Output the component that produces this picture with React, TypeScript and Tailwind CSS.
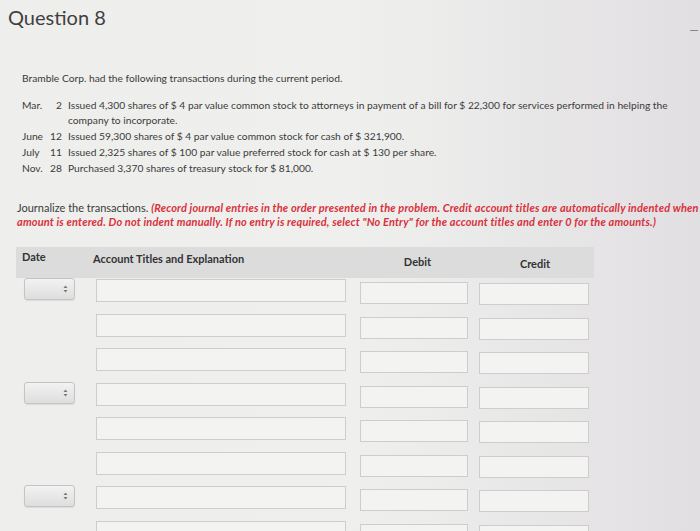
const rows = [true, false, false, true, false, false, true, false]

const txns = [
  { m: 'Mar.', d: '2', text: 'Issued 4,300 shares of $ 4 par value common stock to attorneys in payment of a bill for $ 22,300 for services performed in helping the company to incorporate.' },
  { m: 'June', d: '12', text: 'Issued 59,300 shares of $ 4 par value common stock for cash of $ 321,900.' },
  { m: 'July', d: '11', text: 'Issued 2,325 shares of $ 100 par value preferred stock for cash at $ 130 per share.' },
  { m: 'Nov.', d: '28', text: 'Purchased 3,370 shares of treasury stock for $ 81,000.' },
]

function DateSelect() {
  return (
    <div className="w-[51px] h-[22px] rounded-[3px] border border-[#c4c4c4] bg-gradient-to-b from-[#f2f2f2] to-[#dedede] flex items-center justify-end pr-[6px] shadow-[0_1px_1px_rgba(0,0,0,0.08)]">
      <svg width="5" height="8" viewBox="0 0 5 8">
        <path d="M2.5 0.5 L4.5 3 H0.5 Z" fill="#777" />
        <path d="M2.5 7.5 L4.5 5 H0.5 Z" fill="#777" />
      </svg>
    </div>
  )
}

export default function App() {
  return (
    <div className="w-[700px] h-[531px] overflow-hidden bg-gradient-to-r from-[#eeeeec] via-[#eff0ee] to-[#e2dfe2] text-[#3b3b3b] font-['Lato','Open_Sans',sans-serif] relative">
      <div className="pl-[8px] pt-[4px] text-[20px] leading-[26px] text-[#3f3f3f]">Question 8</div>
      <div className="absolute right-[2px] top-[30px] w-[8px] h-px bg-[#888]" />

      <div className="pl-[22px] pr-[20px] pt-[40px] text-[10.25px] leading-[16px]">
        <div>Bramble Corp. had the following transactions during the current period.</div>
        <div className="mt-[11px] flex flex-col">
          {txns.map(t => (
            <div key={t.m} className="flex">
              <div className="w-[46px] shrink-0 flex justify-between pr-[6px]">
                <span>{t.m}</span>
                <span>{t.d}</span>
              </div>
              <div className="flex-1 leading-[15px] pt-[1px]">{t.text}</div>
            </div>
          ))}
        </div>
      </div>

      <div className="pl-[17px] pt-[25px] text-[11px] leading-[14px] whitespace-nowrap">
        <div>
          Journalize the transactions.{' '}
          <span className="text-[#d8323c] italic font-bold tracking-[0.15px]">
            (Record journal entries in the order presented in the problem. Credit account titles are automatically indented when
          </span>
        </div>
        <div className="text-[#d8323c] italic font-bold tracking-[0.15px]">
          amount is entered. Do not indent manually. If no entry is required, select "No Entry" for the account titles and enter 0 for the amounts.)
        </div>
      </div>

      <div className="ml-[16px] w-[578px] mt-[18px]">
        <div className="h-[31px] bg-[#dcdcdc] flex items-start text-[11px] leading-[14px] font-bold text-[#333]">
          <div className="w-[77px] pl-[6px] pt-[3px]">Date</div>
          <div className="w-[266px] pt-[5px]">Account Titles and Explanation</div>
          <div className="w-[117px] text-center pt-[8px]">Debit</div>
          <div className="w-[118px] text-center pt-[10px]">Credit</div>
        </div>
        <div className="flex flex-col gap-[11.5px] pt-[1px]">
          {rows.map((sel, i) => (
            <div key={i} className="flex items-start h-[23px]">
              <div className="w-[80px] pl-[8px] -mt-[1px]">{sel && <DateSelect />}</div>
              <div className="w-[250px] h-[23px] border border-[#cdcdcd] bg-[#f3f4f2]" />
              <div className="w-[108px] h-[22px] ml-[14px] mt-[3px] border border-[#cdcdcd] bg-[#f3f4f2]" />
              <div className="w-[110px] h-[22px] ml-[11px] mt-[4px] border border-[#cdcdcd] bg-[#f3f4f2]" />
            </div>
          ))}
        </div>
      </div>
    </div>
  )
}
